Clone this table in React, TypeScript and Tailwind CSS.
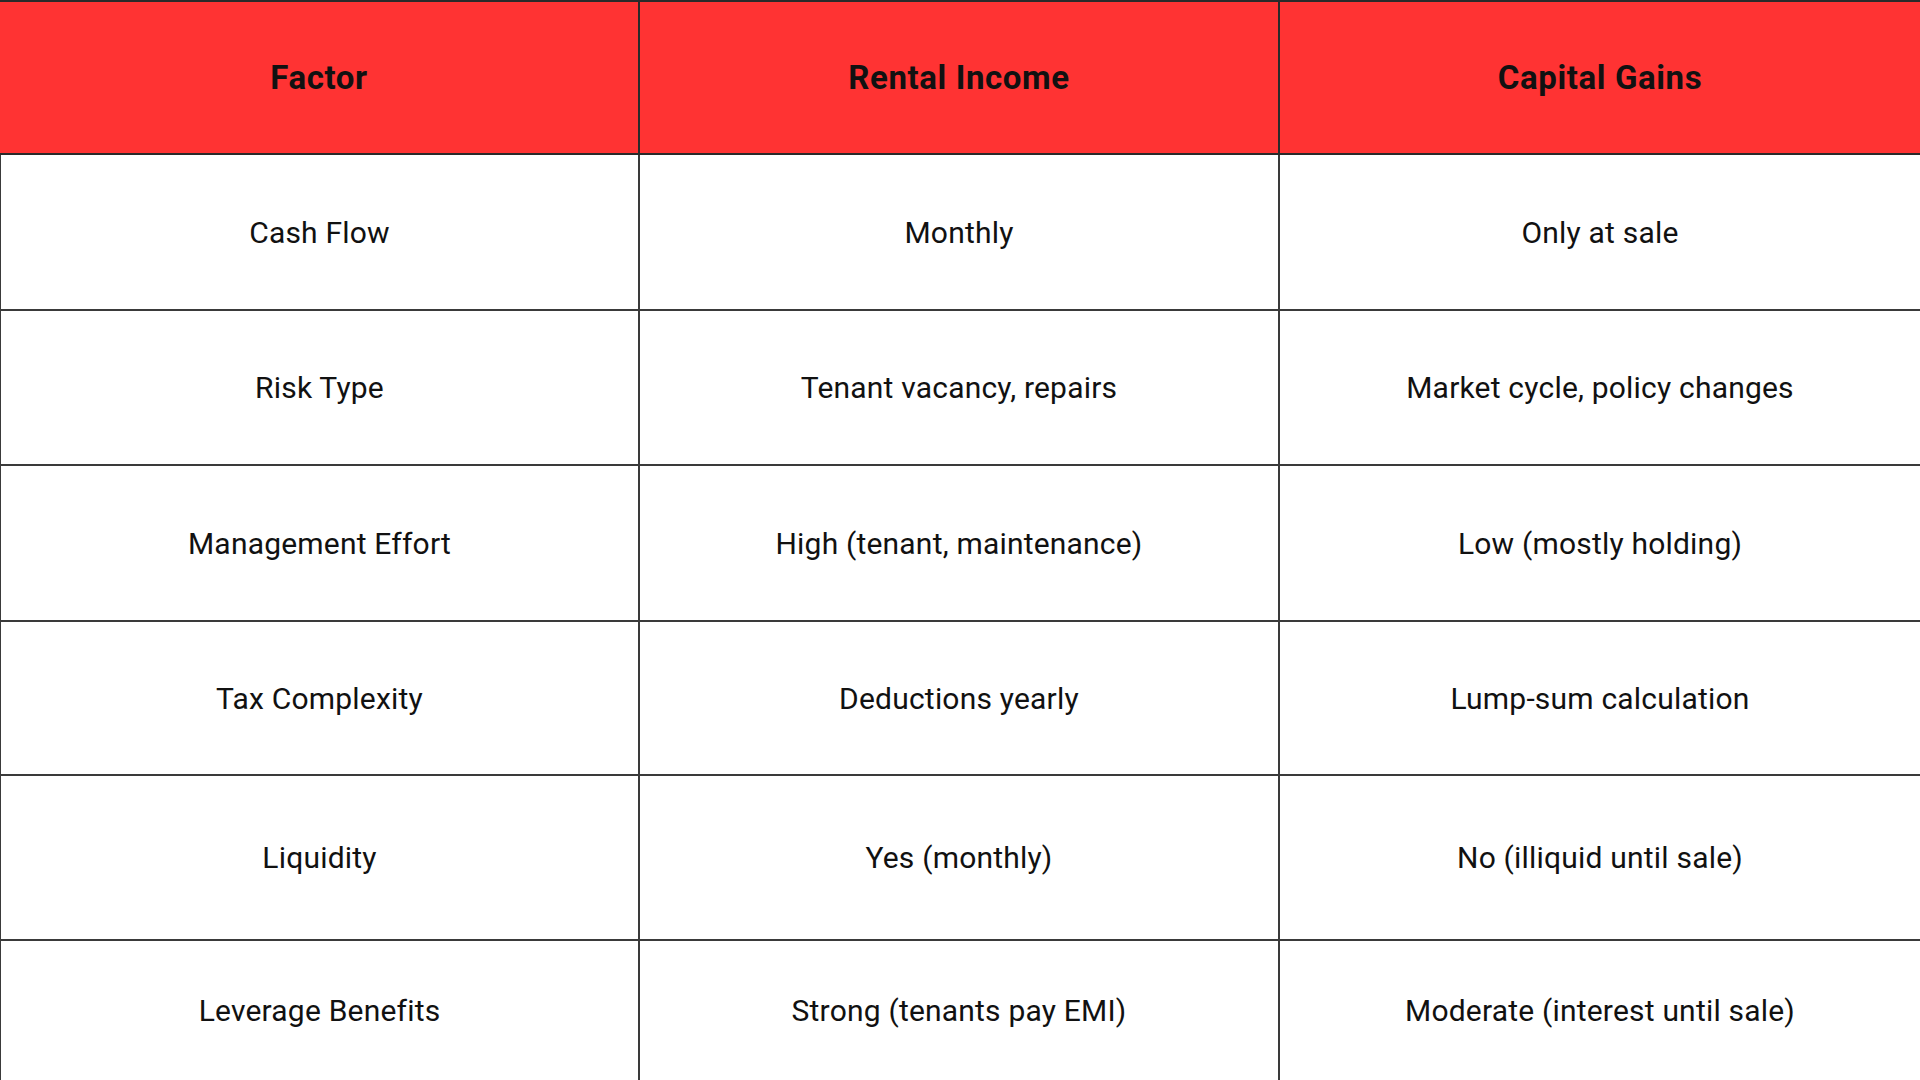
import React from 'react';

const ROWS = [
  { factor: 'Cash Flow', rental: 'Monthly', capital: 'Only at sale', h: 'h-[156px]' },
  { factor: 'Risk Type', rental: 'Tenant vacancy, repairs', capital: 'Market cycle, policy changes', h: 'h-[155px]' },
  { factor: 'Management Effort', rental: 'High (tenant, maintenance)', capital: 'Low (mostly holding)', h: 'h-[156px]' },
  { factor: 'Tax Complexity', rental: 'Deductions yearly', capital: 'Lump-sum calculation', h: 'h-[154px]' },
  { factor: 'Liquidity', rental: 'Yes (monthly)', capital: 'No (illiquid until sale)', h: 'h-[165px]' },
  { factor: 'Leverage Benefits', rental: 'Strong (tenants pay EMI)', capital: 'Moderate (interest until sale)', h: 'h-[141px]' },
];

const App: React.FC = () => {
  return (
    <div className="w-[1920px] h-[1080px] overflow-hidden bg-white" style={{ fontFamily: 'Roboto, "Noto Sans", sans-serif' }}>
      {/* Header */}
      <div className="grid grid-cols-3 h-[155px] bg-[#ff3333] border-t-2 border-b-2 border-[#2a2a2a]">
        {['Factor', 'Rental Income', 'Capital Gains'].map((t, i) => (
          <div
            key={t}
            className={`flex items-center justify-center text-[33px] font-bold tracking-[0.6px] text-[#111] ${i < 2 ? 'border-r-2 border-[#2a2a2a]' : ''}`}
          >
            {t}
          </div>
        ))}
      </div>

      {/* Body */}
      {ROWS.map((r) => (
        <div key={r.factor} className={`grid grid-cols-3 ${r.h} border-b-2 border-[#3a3a3a]`}>
          <div className="flex items-center justify-center border-r-2 border-l border-[#3a3a3a] text-[30px] tracking-[0.2px] text-[#111]">{r.factor}</div>
          <div className="flex items-center justify-center border-r-2 border-[#3a3a3a] text-[30px] tracking-[0.2px] text-[#111]">{r.rental}</div>
          <div className="flex items-center justify-center text-[30px] tracking-[0.2px] text-[#111]">{r.capital}</div>
        </div>
      ))}
    </div>
  );
};

export default App;
